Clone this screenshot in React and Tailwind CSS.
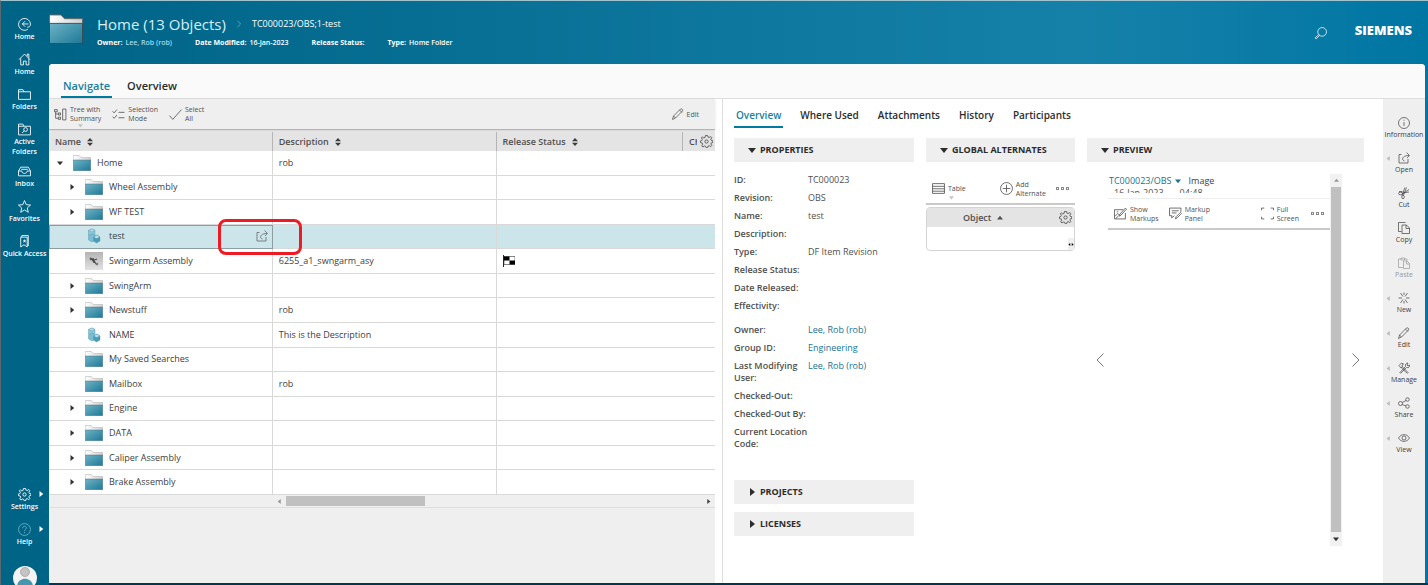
import React from 'react';

function Svg({ size = 'size-3', box = 24, sw = 1.6, className = '', children }) {
  return (
    <svg viewBox={`0 0 ${box} ${box}`} className={`${size} shrink-0 ${className}`} fill="none" stroke="currentColor" strokeWidth={sw} aria-hidden="true">
      {children}
    </svg>
  );
}

const icons = {
  swirl: <><path d="M18 21A11 11 0 1 1 23 11c0 4-2 6-6 6" /><path d="M19 11H8M13 6l-5 5 5 5" /></>,
  house: <path d="M2 12 12 2l10 10M5 10v12h5v-7h5v7h5V10M17 6V2h3v7" />,
  folder: <path d="M1 21V3h8l2 4h12v14zM1 7h10" />,
  activeFolder: <><path d="M1 22V2h8l2 4h12v16zM1 6h10" /><circle cx="14" cy="12" r="3.5" /><path d="m11.500 14.500-4 4" /></>,
  inbox: <path d="M1 11 5 4h14l4 7v9H1zM1 11h6c0 6 10 6 10 0h6M6 8h12" />,
  star: <path d="m12 1 3.200 7.600 8 .7-6.100 5.400 1.900 8L12 18.400 5 22.700l1.900-8L.8 9.300l8-.7z" />,
  bookmark: <><path d="M7 4V1h12v19l-2-2" /><path d="M5 4h12v18l-6-4-6 4z" /><path d="m12 8 .8 2h2l-1.600 1.500.6 2.200-1.800-1.200-1.800 1.200.6-2.200L9.200 10h2z" fill="currentColor" strokeWidth=".4" /></>,
  gear: <><circle cx="12" cy="12" r="3" /><path d="m10 1-.6 3.400-2.400 1-2.800-2L2.600 5l1.700 3.200-.8 2L.8 11v3l3.200.8 1 2.200-1.800 3L5.500 22l3-1.800 2 .8.8 2.500h2.800l.7-3 2.200-.9 2.800 1.900 2-2-1.700-3 .9-2.100 3-.8v-2.800l-3.100-.8-.9-2.200 1.800-2.800-2-2.100-2.900 1.800-2.200-.9L14 1z" /></>,
  help: <><circle cx="12" cy="12" r="11" /><path d="M8.500 9.500c0-5 7-4.500 7-.5 0 3-3.500 2.500-3.500 6M12 17v2" /></>,
  info: <><circle cx="12" cy="12" r="11" /><path d="M12 10v8M12 5.500v2" /></>,
  open: <path d="M7 5H2v17h18v-8M13 18c-6-1-6-11 9-11M17 1l6 6-5 5" />,
  cut: <><ellipse cx="5" cy="13" rx="4" ry="2.500" /><ellipse cx="10" cy="20" rx="2.500" ry="3.500" /><path d="m9 14 13-9M9 12l13-2M11 16 17 1M8 17l6-16M2 9h7" /></>,
  copy: <><path d="M7 19H1V1h14" /><path d="M8 6h9l6 6v11H8zM16 6v7h7" /></>,
  paste: <><path d="M10 21H1V4h5M13 4h5v3" /><path d="M6 2h7v4H6zM11 8h7l5 5v10H11zM17 8v6h6" /></>,
  burst: <path d="M1 12h7M16 12h7M5 2l5 7M19 2l-5 7M5 22l5-7M19 22l-5-7M12 1v5M12 18v5" />,
  pencil: <path d="m1 23 2-7L17 2c2-2 6 2 4 4L7 20zM3 16l4 4M15 4l5 5" />,
  tools: <><path d="m3 22 12-13M5 23 17 11M15 9c-1-4 1-7 5-7l-2 4 2 2 3-2c1 4-2 6-6 5" /><path d="M21 22 8 9M19 23 7 12M2 7l5-5 4 2-3 2 1 3-3 3z" /></>,
  share: <><circle cx="5" cy="13" r="4" /><circle cx="19" cy="5" r="3.500" /><circle cx="19" cy="19" r="3.500" /><path d="m8.500 11 7.500-4M8.500 15l7.500 3" /></>,
  eye: <><path d="M1 12c5-9 17-9 22 0-5 9-17 9-22 0z" /><circle cx="12" cy="12" r="4" /></>,
  search: <><circle cx="15" cy="9" r="8" /><path d="m9 14-7 6M10.500 15.500 4 22l-2-2" /></>,
  tree: <><path d="M1 3h5v4H1zM3 7v12h5M3 11h5M8 9h4v4H8zM8 17h4v4H8z" /><path d="M16 2h6v20h-6z" /></>,
  checklist: <path d="m1 6 3 3 5-6M1 16l3 3 5-6M12 8h11M12 18h11" />,
  check: <path d="m1 14 6 7L23 3" />,
  table: <path d="M1 3h22v18H1zM1 8h22M1 12.500h22M1 17h22" />,
  plus: <><circle cx="12" cy="12" r="11" /><path d="M12 5v14M5 12h14" /></>,
  showMarkups: <><path d="M17 5H1v17h20V11" /><path d="m9 17 2-4L21 2l2 2-10 11zM2 17l5-5 3 3M5 9h3M3 21l5-4" /></>,
  markupPanel: <><path d="M22 9V2H1v14h4v4l5-4" /><path d="M5 7h13M5 11h9M12 22l1-4 8-8 2 2-8 8z" /></>,
  full: <path d="M1 6V2h5M18 2h5v4M1 18v4h5M18 22h5v-4" />,
};

const Icon = ({ name, ...rest }) => <Svg {...rest}>{icons[name]}</Svg>;

function Tri({ dir, className = '' }) {
  const d = { down: 'M0 2h8L4 7z', up: 'M0 6h8L4 1z', right: 'M2 0v8l5-4z', left: 'M6 0v8L1 4z' }[dir];
  return <svg viewBox="0 0 8 8" className={`shrink-0 ${className}`} fill="currentColor" aria-hidden="true"><path d={d} /></svg>;
}

function Sort() {
  return (
    <svg viewBox="0 0 6 8" className="h-2 w-1.5 shrink-0" fill="#3c3c3c" aria-hidden="true"><path d="M3 0l3 3.300H0zM3 8l3-3.300H0z" /></svg>
  );
}

function FolderPic({ className = 'h-4 w-[18px]', light = false }) {
  return (
    <svg viewBox="0 0 36 32" preserveAspectRatio="none" className={`shrink-0 ${className}`} aria-hidden="true">
      <defs>
        <linearGradient id="fld" x1="0" y1="0" x2="1" y2="1"><stop offset="0" stopColor="#6fb3c6" /><stop offset="1" stopColor="#1d7896" /></linearGradient>
        <linearGradient id="fldTop" x1="0" y1="0" x2="1" y2="0"><stop offset="0" stopColor="#fff" /><stop offset="1" stopColor="#cfcfcf" /></linearGradient>
      </defs>
      <path d="M.5 12V1h12l4 4h19v7z" fill="url(#fldTop)" stroke={light ? '#666' : '#aaa'} />
      <path d="M.5 10h35v21.500H.5z" fill="url(#fld)" stroke={light ? '#3c4a50' : '#4c7480'} />
    </svg>
  );
}

function CubesPic() {
  return (
    <svg viewBox="0 0 26 32" className="mx-[2px] h-4 w-3.5 shrink-0" stroke="#4a93ab" strokeWidth=".8" aria-hidden="true">
      <path d="m2 5 7-3 6 3v9l-6 3-7-3z" fill="#8cc7d8" />
      <path d="m2 15 7-3 6 3v10l-6 3-7-4z" fill="#7dbdd0" />
      <path d="m12 18 7-4 6 4v8l-7 4-6-4z" fill="#4a9db6" />
      <path d="m12 18 6 3 7-3-6-4zM2 5l7 3 6-3-6-3z" fill="#b9e0ea" />
    </svg>
  );
}

function ArmPic() {
  return (
    <svg viewBox="0 0 18 18" className="size-[18px] shrink-0" aria-hidden="true">
      <defs><linearGradient id="arm" x1="0" y1="0" x2="0" y2="1"><stop offset="0" stopColor="#b4b4b4" /><stop offset="1" stopColor="#e2e2e2" /></linearGradient></defs>
      <path fill="url(#arm)" d="M0 0h18v18H0z" />
      <path d="M5 6l3 2M7 9l5-2M9 9l3 4M8 6l1 5" stroke="#444" strokeWidth="1.200" />
      <circle cx="6" cy="7" r="1.300" fill="#555" /><circle cx="12" cy="12" r="1.300" fill="#777" />
    </svg>
  );
}

function FlagPic() {
  return (
    <svg viewBox="0 0 12 12" className="size-3" aria-hidden="true">
      <path d="M.5 0v12" stroke="#222" />
      <path d="M1 1.500h11v8H1z" fill="#fff" stroke="#333" strokeWidth=".6" />
      <path d="M1 1.500h5.500v4H1zM6.500 5.500H12v4H6.500z" fill="#000" />
    </svg>
  );
}

const navItems = [
  ['swirl', 'Home'], ['house', 'Home'], ['folder', 'Folders'], ['activeFolder', 'Active Folders'],
  ['inbox', 'Inbox'], ['star', 'Favorites'], ['bookmark', 'Quick Access'],
];

function NavButton({ icon, label, arrow, dim }) {
  return (
    <button className="relative flex min-h-[35px] w-full flex-col items-center gap-px text-[7px] leading-[10px] font-semibold text-white">
      <Icon name={icon} size="size-[13px]" className={dim ? 'text-[#6fb0c6]' : ''} />
      <span className={label === 'Active Folders' ? 'w-8 pb-2' : 'whitespace-nowrap'}>{label}</span>
      {arrow && <Tri dir="right" className="absolute top-[3px] right-1 size-[6px]" />}
    </button>
  );
}

function Sidebar() {
  return (
    <nav className="flex w-12 shrink-0 flex-col overflow-hidden bg-[#006487] pr-px">
      <div className="flex flex-col pt-[17px]">
        {navItems.map(([icon, label], i) => <NavButton key={i} icon={icon} label={label} />)}
      </div>
      <div className="mt-auto flex flex-col items-center">
        <NavButton icon="gear" label="Settings" arrow />
        <NavButton icon="help" label="Help" arrow dim />
        <button aria-label="Profile" className="mt-2 h-[19px] overflow-hidden">
          <svg viewBox="0 0 24 24" className="size-6" aria-hidden="true">
            <circle cx="12" cy="12" r="12" fill="#f4f4f4" />
            <path d="M4 21c0-11 16-11 16 0-5 4-11 4-16 0z" fill="#4596af" />
            <circle cx="12" cy="6" r="4.500" fill="#c4c4c4" stroke="#999" strokeWidth=".7" />
          </svg>
        </button>
      </div>
    </nav>
  );
}

function Header() {
  return (
    <header className="flex h-[63px] shrink-0 items-start pt-[13px] pr-4 text-white">
      <FolderPic className="h-[30px] w-[34px]" light />
      <div className="ml-3.5 flex flex-col">
        <div className="flex h-5 items-center">
          <h1 className="text-[15px] leading-5 whitespace-nowrap text-[#d5f0f7]">Home (13 Objects)</h1>
          <svg viewBox="0 0 6 10" className="ml-2.5 h-2 w-1.5" fill="none" stroke="#6fb0c6" aria-hidden="true"><path d="m1 1 4 4-4 4" /></svg>
          <a href="#item" className="ml-2.5 text-[9px] leading-5 whitespace-nowrap">TC000023/OBS;1-test</a>
        </div>
        <dl className="mt-[3px] flex gap-[23px] text-[7px] leading-3 font-semibold whitespace-nowrap">
          <div className="flex gap-[3px]"><dt className="font-bold">Owner:</dt><dd className="text-[#a5dbea]">Lee, Rob (rob)</dd></div>
          <div className="flex gap-[3px]"><dt className="font-bold">Date Modified:</dt><dd>16-Jan-2023</dd></div>
          <div className="flex"><dt className="font-bold">Release Status:</dt></div>
          <div className="flex gap-[3px]"><dt className="font-bold">Type:</dt><dd>Home Folder</dd></div>
        </dl>
      </div>
      <button aria-label="Search" className="mt-[13px] ml-auto"><Icon name="search" size="size-[13px]" sw={1.4} /></button>
      <span className="mt-2 ml-7 text-[13px] leading-4 font-extrabold whitespace-nowrap">SIEMENS</span>
    </header>
  );
}

const rows = [
  { name: 'Home', desc: 'rob', pic: 'folder', open: true },
  { name: 'Wheel Assembly', pic: 'folder', kids: true },
  { name: 'WF TEST', pic: 'folder', kids: true },
  { name: 'test', pic: 'cubes', selected: true },
  { name: 'Swingarm Assembly', desc: '6255_a1_swngarm_asy', pic: 'arm', flag: true },
  { name: 'SwingArm', pic: 'folder', kids: true },
  { name: 'Newstuff', desc: 'rob', pic: 'folder', kids: true },
  { name: 'NAME', desc: 'This is the Description', pic: 'cubes' },
  { name: 'My Saved Searches', pic: 'folder' },
  { name: 'Mailbox', desc: 'rob', pic: 'folder' },
  { name: 'Engine', pic: 'folder', kids: true },
  { name: 'DATA', pic: 'folder', kids: true },
  { name: 'Caliper Assembly', pic: 'folder', kids: true },
  { name: 'Brake Assembly', pic: 'folder', kids: true },
];

const pics = { folder: <FolderPic />, cubes: <CubesPic />, arm: <ArmPic /> };

function Tool({ icon, lines, menu, size = 'size-[13px]' }) {
  return (
    <button className="relative flex items-center gap-[3px] text-left text-[7px] leading-[9px] whitespace-nowrap text-[#505050]">
      <Icon name={icon} size={size} sw={1.5} />
      <span>{lines.map((l) => <span key={l} className="block">{l}</span>)}</span>
      {menu && <Tri dir="down" className="absolute top-full left-1/2 size-[5px] text-[#c4c4c4]" />}
    </button>
  );
}

function Row({ row }) {
  const cell = 'border-b border-[#d9d9d9] px-1.5 py-0';
  return (
    <tr className={row.selected ? 'bg-[#cce5ea]' : 'bg-white'}>
      <td className={`relative border-r border-b border-[#d9d9d9] p-0 ${row.selected ? 'outline-1 -outline-offset-1 outline-[#8d9ea3]' : ''}`}>
        <div className={`flex h-5 items-center ${row.open ? 'pl-2' : 'pl-5'}`}>
          <span className="flex w-4 shrink-0">
            {(row.open || row.kids) && (
              <button aria-label={`Toggle ${row.name}`}><Tri dir={row.open ? 'down' : 'right'} className="size-1.5 text-[#333]" /></button>
            )}
          </span>
          {pics[row.pic]}
          <span className="ml-1.5 whitespace-nowrap">{row.name}</span>
          {row.selected && (
            <button aria-label="Open" className="mr-1 ml-auto text-[#666]"><Icon name="open" size="size-3" /></button>
          )}
        </div>
        {row.selected && (
          <div className="absolute -top-1.5 -right-[30px] z-10 h-9 w-[84px] rounded-lg border-3 border-[#ed1c24]" />
        )}
      </td>
      <td className={`${cell} border-r whitespace-nowrap`}>{row.desc}</td>
      <td className={cell}>{row.flag && <FlagPic />}</td>
      <td className={cell} />
    </tr>
  );
}

function TreePanel() {
  const th = 'border-r border-[#b5b5b5] px-1.5 py-0 text-left font-semibold';
  return (
    <section className="flex w-[48.4%] shrink-0 flex-col bg-[#efefef]">
      <div className="flex h-[31px] items-center gap-[11px] border-b border-[#b5b5b5] pr-4 pl-[5px] shadow-sm">
        <Tool icon="tree" lines={['Tree with', 'Summary']} menu />
        <Tool icon="checklist" lines={['Selection', 'Mode']} />
        <Tool icon="check" lines={['Select', 'All']} />
        <span className="ml-auto"><Tool icon="pencil" lines={['Edit']} size="size-3" /></span>
      </div>
      <table className="mt-0.5 h-[363px] w-full table-fixed border-separate border-spacing-0 text-[9px] leading-3 text-[#404040]">
        <colgroup><col className="w-[33.6%]" /><col className="w-[33.6%]" /><col className="w-[28%]" /><col /></colgroup>
        <thead>
          <tr className="h-[19px] bg-[#e4e4e4] text-[#505050]">
            <th className={th}><span className="flex items-center gap-1.5">Name <Sort /></span></th>
            <th className={th}><span className="flex items-center gap-1.5">Description <Sort /></span></th>
            <th className={th}><span className="flex items-center gap-1.5">Release Status <Sort /></span></th>
            <th className="py-0 pr-0.5 pl-1.5 text-left font-semibold">
              <span className="flex items-center justify-between">
                <span className="w-2 overflow-hidden whitespace-nowrap">CHI</span>
                <button aria-label="Table settings"><Icon name="gear" size="size-[13px]" /></button>
              </span>
            </th>
          </tr>
        </thead>
        <tbody>{rows.map((r) => <Row key={r.name} row={r} />)}</tbody>
      </table>
      <div className="flex h-[13px] border-b border-[#dedede]">
        <div className="w-[33.6%]" />
        <div className="flex flex-1 items-center pr-1 pl-1">
          <Tri dir="left" className="size-[5px] text-[#999]" />
          <div className="ml-1 h-2.5 w-[32%] bg-[#c0c0c0]" />
          <Tri dir="right" className="ml-auto size-[5px] text-[#444]" />
        </div>
      </div>
    </section>
  );
}

function SectionHead({ title, open }) {
  return (
    <h2>
      <button aria-expanded={!!open} className="flex h-6 w-full items-center gap-1 bg-[#efefef] pl-3.5 text-[9px] leading-3 font-bold text-[#2c2c2c]">
        <Tri dir={open ? 'down' : 'right'} className="size-2" />
        {title}
      </button>
    </h2>
  );
}

const props = [
  ['ID:', 'TC000023'], ['Revision:', 'OBS'], ['Name:', 'test'], ['Description:', ''], ['Type:', 'DF Item Revision'],
  ['Release Status:', ''], ['Date Released:', ''], ['Effectivity:', ''],
];
const ownerProps = [
  ['Owner:', 'Lee, Rob (rob)'], ['Group ID:', 'Engineering'], ['Last Modifying User:', 'Lee, Rob (rob)'],
  ['Checked-Out:', ''], ['Checked-Out By:', ''], ['Current Location Code:', ''],
];

function PropList({ items, link }) {
  return (
    <dl className="flex flex-col gap-1.5 text-[9px] leading-3">
      {items.map(([k, v]) => (
        <div key={k} className="flex">
          <dt className="w-[74px] shrink-0 font-semibold text-[#505050]">{k}</dt>
          <dd className="whitespace-nowrap text-[#505050]">{link && v ? <a href="#owner" className="text-[#197391]">{v}</a> : v}</dd>
        </div>
      ))}
    </dl>
  );
}

function Dots() {
  return (
    <button aria-label="More" className="flex gap-0.5">
      {[0, 1, 2].map((i) => <span key={i} className="size-[3px] border border-[#888]" />)}
    </button>
  );
}

function Alternates() {
  return (
    <div>
      <SectionHead title="GLOBAL ALTERNATES" open />
      <div className="mt-3 flex h-[31px] items-center justify-between border-b-2 border-[#c9c9c9] pr-1.5 pl-1.5">
        <Tool icon="table" lines={['Table']} menu />
        <span className="ml-6"><Tool icon="plus" lines={['Add', 'Alternate']} /></span>
        <Dots />
      </div>
      <div className="mt-0.5 rounded-sm border border-[#d4d4d4]">
        <div className="flex h-[19px] items-center bg-[#e4e4e4] pr-0.5 pl-9 text-[9px] leading-3 font-semibold text-[#505050]">
          Object <Tri dir="up" className="ml-1.5 size-1.5" />
          <button aria-label="Alternates settings" className="ml-auto"><Icon name="gear" size="size-[13px]" /></button>
        </div>
        <div className="flex h-[23px] items-end justify-end">
          <div className="flex h-3 w-1.5 items-center justify-center bg-[#efefef]"><Tri dir="left" className="size-[3px]" /><Tri dir="right" className="size-[3px]" /></div>
        </div>
      </div>
    </div>
  );
}

function Chevron({ d, label }) {
  return (
    <button aria-label={label} className="text-[#777]">
      <svg viewBox="0 0 8 14" className="h-3.5 w-2" fill="none" stroke="currentColor" aria-hidden="true"><path d={d} /></svg>
    </button>
  );
}

function Preview() {
  return (
    <div className="flex flex-col">
      <SectionHead title="PREVIEW" open />
      <div className="mt-3 flex h-[372px]">
        <div className="flex min-w-0 flex-1 flex-col pl-[21px]">
          <div className="flex h-3.5 items-center pl-px text-[9px] leading-3 whitespace-nowrap text-[#404040]">
            <a href="#revision" className="text-[#197391]">TC000023/OBS</a>
            <Tri dir="down" className="ml-[3px] size-1.5 text-[#197391]" />
            <span className="ml-2">Image</span>
          </div>
          <div className="ml-1.5 flex h-[5px] gap-4 overflow-hidden text-[9px] leading-[10px] text-[#505050]"><span>16-Jan-2023</span><span>04:48</span></div>
          <div className="mt-[5px] flex h-8 items-center gap-2.5 border-t border-b-2 border-t-[#eee] border-b-[#c9c9c9] pr-1.5 pl-1.5">
            <Tool icon="showMarkups" lines={['Show', 'Markups']} />
            <Tool icon="markupPanel" lines={['Markup', 'Panel']} />
            <span className="mr-0.5 ml-auto"><Tool icon="full" lines={['Full', 'Screen']} /></span>
            <Dots />
          </div>
          <div className="-ml-3 flex flex-1 items-start pt-[123px]"><Chevron label="Previous" d="M7.500.5 1 7l6.500 6.500" /></div>
        </div>
        <div className="flex w-3 flex-col items-center bg-[#f1f1f1]">
          <Tri dir="up" className="my-1 size-[5px] text-[#999]" />
          <div className="w-2.5 flex-1 bg-[#c0c0c0]" />
          <Tri dir="down" className="my-1 size-1.5 text-[#333]" />
        </div>
        <div className="flex w-[22px] items-center justify-end pr-1"><Chevron label="Next" d="M.5.5 7 7 .5 13.500" /></div>
      </div>
    </div>
  );
}

function Details() {
  const tabs = ['Overview', 'Where Used', 'Attachments', 'History', 'Participants'];
  return (
    <section className="ml-[7px] flex min-w-0 flex-1 flex-col overflow-hidden border-l border-[#dedede] bg-white pr-[19px] pl-[11px]">
      <div className="flex gap-[15px] pt-[9px]">
        {tabs.map((t, i) => (
          <button key={t} className={`h-5 border-b-2 px-0.5 pb-1 text-[10px] leading-3 font-semibold whitespace-nowrap ${i === 0 ? 'border-[#007a9e] text-[#197fa0]' : 'border-transparent text-[#2c2c2c]'}`}>{t}</button>
        ))}
      </div>
      <div className="mt-2.5 grid grid-cols-[180fr_149fr_277fr] gap-3">
        <div className="flex flex-col">
          <SectionHead title="PROPERTIES" open />
          <div className="mt-3 flex flex-col gap-3">
            <PropList items={props} />
            <PropList items={ownerProps} link />
          </div>
          <div className="mt-[30px] flex flex-col gap-2">
            <SectionHead title="PROJECTS" />
            <SectionHead title="LICENSES" />
          </div>
        </div>
        <Alternates />
        <Preview />
      </div>
    </section>
  );
}

const commands = [
  ['info', 'Information'], ['open', 'Open', true], ['cut', 'Cut'], ['copy', 'Copy'], ['paste', 'Paste', false, true],
  ['burst', 'New', true], ['pencil', 'Edit', true], ['tools', 'Manage', true], ['share', 'Share', true], ['eye', 'View', true],
];

function CommandBar() {
  return (
    <aside className="flex w-[42px] shrink-0 flex-col bg-[#efefef] pt-[18px]">
      {commands.map(([icon, label, arrow, off]) => (
        <button key={label} disabled={off} className={`relative flex h-[35px] flex-col items-center gap-px text-[7px] leading-[10px] ${off ? 'text-[#999]' : 'text-[#404040]'}`}>
          <Icon name={icon} size="size-3" sw={1.4} />
          <span className="whitespace-nowrap">{label}</span>
          {arrow && <Tri dir="left" className="absolute top-1 left-[3px] size-[5px] text-[#bbb]" />}
        </button>
      ))}
    </aside>
  );
}

export default function App() {
  return (
    <div className="flex h-screen min-h-[585px] border-t border-l border-t-[#9fc3cf] border-l-[#5a6a70] bg-[#006487] font-['Open_Sans','Noto_Sans',sans-serif]">
      <Sidebar />
      <div className="flex min-w-0 flex-1 flex-col bg-linear-to-r from-[#006487] from-0% via-[#1581a9] via-75% to-[#0076a3]">
        <Header />
        <main className="mr-[3px] flex min-h-0 flex-1 flex-col overflow-hidden rounded-t-sm bg-white">
          <div className="flex h-[35px] shrink-0 items-end gap-[13px] border-b border-[#dedede] bg-[#fafafa] pl-3">
            {['Navigate', 'Overview'].map((t, i) => (
              <button key={t} className={`h-5 border-b-2 px-0.5 pb-0.5 text-[11px] leading-4 font-semibold ${i === 0 ? 'border-[#007a9e] text-[#197fa0]' : 'border-transparent text-[#2c2c2c]'}`}>{t}</button>
            ))}
          </div>
          <div className="flex min-h-0 flex-1">
            <TreePanel />
            <Details />
            <CommandBar />
          </div>
        </main>
        <div className="h-0.5 shrink-0 bg-[#003750]" />
      </div>
    </div>
  );
}
